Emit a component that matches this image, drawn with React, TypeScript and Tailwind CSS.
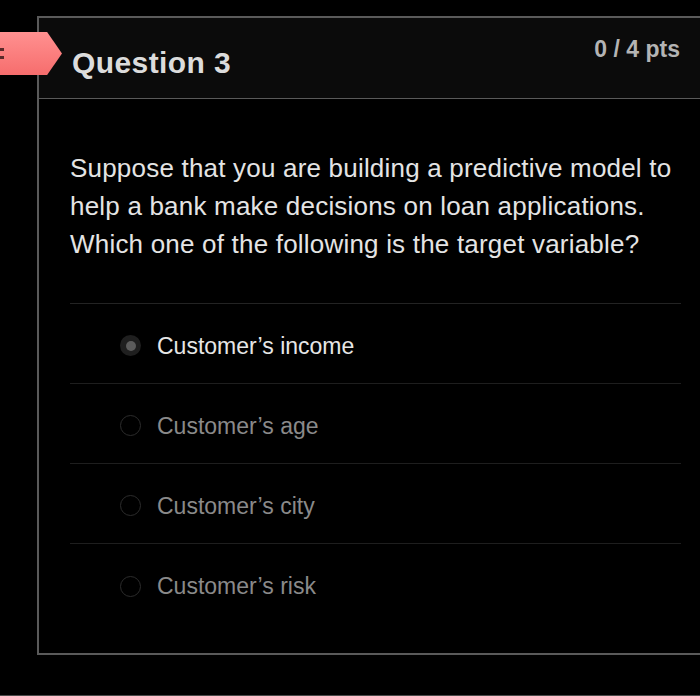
import React from "react";

const options = [
  { label: "Customer’s income", selected: true },
  { label: "Customer’s age", selected: false },
  { label: "Customer’s city", selected: false },
  { label: "Customer’s risk", selected: false },
];

function Radio({ selected }: { selected: boolean }) {
  if (selected) {
    return (
      <span className="mt-[4px] flex h-[21px] w-[21px] shrink-0 items-center justify-center rounded-full bg-[#1f1f1f]">
        <span className="h-[10px] w-[10px] rounded-full bg-[#5c5c5c]" />
      </span>
    );
  }
  return <span className="mt-[4px] h-[21px] w-[21px] shrink-0 rounded-full border-[1.5px] border-[#2c2c2c]" />;
}

export default function App() {
  return (
    <div
      className="relative h-[696px] w-[700px] overflow-hidden bg-black"
      style={{ fontFamily: '"Liberation Sans", Arial, sans-serif' }}
    >
      {/* incorrect answer tab, its label cut off by the screen edge */}
      <div
        className="absolute left-0 top-[32px] z-10 flex h-[43px] w-[62px] flex-col justify-center gap-[5px] bg-gradient-to-b from-[#ff9090] to-[#f66d6d]"
        style={{ clipPath: "polygon(0 0, 76% 0, 100% 50%, 76% 100%, 0 100%)" }}
      >
        <span className="h-[3px] w-[4px] bg-[#5a2a2a]" />
        <span className="h-[3px] w-[4px] bg-[#5a2a2a]" />
      </div>

      <div className="ml-[37px] mt-[16px] flex h-[639px] flex-col border-b-2 border-l-2 border-t-2 border-[#5a5a5a]">
        {/* header */}
        <div className="flex h-[81px] shrink-0 items-start justify-between border-b-[1.5px] border-[#5a5a5a] bg-[#0b0b0b] pl-[33px] pr-[20px]">
          <h2 className="mt-[27px] text-[30px] font-bold leading-[36px] tracking-[0.4px] text-[#dcdcdc]">Question 3</h2>
          <span className="mt-[17px] text-[23px] font-bold leading-[28px] text-[#b4b4b4]">0 / 4 pts</span>
        </div>

        {/* body */}
        <div className="flex flex-col pl-[31px] pr-[19px] pt-[50px]">
          <p className="w-[625px] text-[26px] leading-[38px] tracking-[0.2px] text-[#e4e4e4]">
            Suppose that you are building a predictive model to help a bank make decisions on loan applications.
            Which one of the following is the target variable?
          </p>

          <div className="mt-[40px] border-t border-[#232323]">
            {options.map((o, i) => (
              <label
                key={o.label}
                className={
                  "flex h-[80px] items-center gap-[16px] pl-[50px] " +
                  (i < options.length - 1 ? "border-b border-[#1e1e1e]" : "")
                }
              >
                <Radio selected={o.selected} />
                <span
                  className={
                    "pt-[5px] text-[23px] leading-none " + (o.selected ? "text-[#e6e6e6]" : "text-[#8a8a8a]")
                  }
                >
                  {o.label}
                </span>
              </label>
            ))}
          </div>
        </div>
      </div>

      <div className="absolute bottom-0 left-0 h-px w-full bg-[#4a4a4a]" />
    </div>
  );
}
